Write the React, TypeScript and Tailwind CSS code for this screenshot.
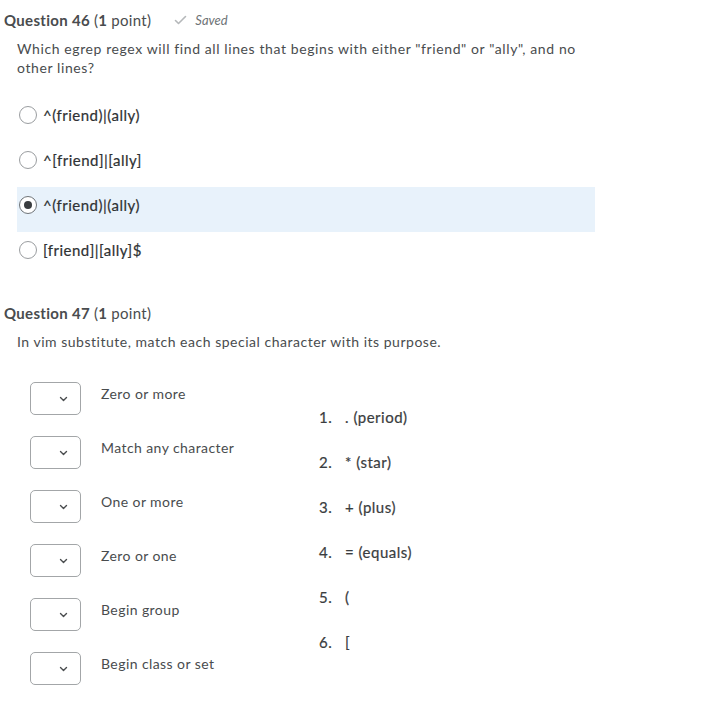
import React from "react";

const options = ["^(friend)|(ally)", "^[friend]|[ally]", "^(friend)|(ally)", "[friend]|[ally]$"];
const labels = ["Zero or more", "Match any character", "One or more", "Zero or one", "Begin group", "Begin class or set"];
const items = [". (period)", "* (star)", "+ (plus)", "= (equals)", "(", "["];

function Radio({ checked }: { checked: boolean }) {
  return (
    <span className={"flex h-[18px] w-[18px] shrink-0 items-center justify-center rounded-full border bg-white " + (checked ? "border-[#6f7478]" : "border-[#9a9da0]")}>
      {checked && <span className="h-[8px] w-[8px] rounded-full bg-[#3a3d40]" />}
    </span>
  );
}

function SelectBox() {
  return (
    <div className="flex h-[33px] w-[51px] shrink-0 items-center justify-end rounded-[5px] border border-[#a3a6a8] bg-white pr-[12px]">
      <svg width="9" height="6" viewBox="0 0 9 6" fill="none">
        <polyline points="1.5,1.5 4.5,4.5 7.5,1.5" stroke="#494c4e" strokeWidth="1.4" strokeLinecap="round" strokeLinejoin="round" />
      </svg>
    </div>
  );
}

export default function App() {
  return (
    <div className="h-[711px] w-[711px] bg-white text-[#494c4e]" style={{ fontFamily: "Lato, 'Noto Sans', sans-serif" }}>
      <div className="flex items-center pl-[4px] pt-[10px] text-[15px] leading-[20px] tracking-[0.3px]">
        <span className="font-bold">Question 46</span>
        <span className="ml-[4px]">(<span className="font-bold">1</span> point)</span>
        <svg className="ml-[23px]" width="13" height="10" viewBox="0 0 13 10" fill="none">
          <polyline points="1.5,5.5 4.5,8.5 11.5,1.5" stroke="#b5b8ba" strokeWidth="1.6" strokeLinecap="round" strokeLinejoin="round" />
        </svg>
        <span className="ml-[8px] text-[13px] italic tracking-normal text-[#6e7376]">Saved</span>
      </div>
      <p className="ml-[17px] mt-[9px] w-[580px] text-[14px] leading-[19px] tracking-[0.6px] text-[#494c4e]">
        Which egrep regex will find all lines that begins with either "friend" or "ally", and no other lines?
      </p>
      <div className="ml-[17px] mt-[20px] w-[578px]">
        {options.map((o, i) => (
          <div key={i} className={"flex h-[45px] items-start gap-[6px] pl-[2px] pt-[9px] " + (i === 2 ? "bg-[#e8f2fb]" : "")}>
            <Radio checked={i === 2} />
            <span className="text-[15px] leading-[18px] tracking-[0.5px] text-[#2f3234] [-webkit-text-stroke:0.2px_#2f3234]">{o}</span>
          </div>
        ))}
      </div>
      <div className="mt-[26px] pl-[4px] text-[15px] leading-[20px] tracking-[0.3px]">
        <span className="font-bold">Question 47</span>
        <span className="ml-[4px]">(<span className="font-bold">1</span> point)</span>
      </div>
      <p className="ml-[17px] mt-[9px] text-[14px] leading-[19px] tracking-[0.52px]">In vim substitute, match each special character with its purpose.</p>
      <div className="ml-[30px] mt-[31px] flex">
        <div className="flex w-[289px] flex-col gap-[21px]">
          {labels.map((l, i) => (
            <div key={i} className="flex items-start gap-[20px]">
              <SelectBox />
              <span className="pt-[2px] text-[14px] leading-[19px] tracking-[0.42px]">{l}</span>
            </div>
          ))}
        </div>
        <div className="mt-[25px] flex flex-col">
          {items.map((t, i) => (
            <div key={i} className="flex h-[45px] items-start text-[15px] leading-[20px] tracking-[0.5px] text-[#3a3d40] [-webkit-text-stroke:0.2px_#3a3d40]">
              <span className="w-[26px]">{i + 1}.</span>
              <span>{t}</span>
            </div>
          ))}
        </div>
      </div>
    </div>
  );
}
